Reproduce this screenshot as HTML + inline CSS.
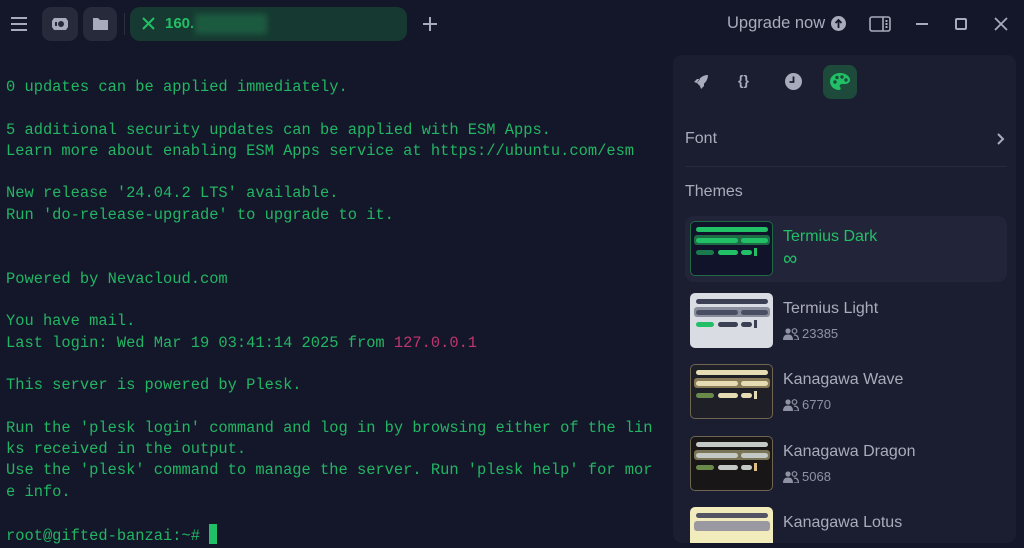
<!DOCTYPE html>
<html><head><style>
*{margin:0;padding:0;box-sizing:border-box}
body{width:1024px;height:547px;background:#141729;overflow:hidden;position:relative;font-family:"Liberation Sans",sans-serif}
.term{position:absolute;left:6px;top:77px;font-family:"Liberation Mono",monospace;font-size:15.4px;line-height:21.3px;color:#22b563;white-space:pre}
.pink{color:#c0346f}
.cur{display:inline-block;width:8px;height:20px;background:#22c066;vertical-align:-4px}
.panel{position:absolute;left:673px;top:55px;width:343px;height:488px;background:#1b1e31;border-radius:9px;overflow:hidden}
.item{position:absolute;left:12px;width:322px;height:66px;border-radius:9px}
.thumb{position:absolute;left:5px;top:5px;width:83px;height:55px;border-radius:5px;border:1px solid}
.thumb i{position:absolute;height:5px;border-radius:2.5px;display:block}
.name{position:absolute;left:98px;top:12px;font-size:16px;color:#a9acbb}
.cnt{position:absolute;left:98px;top:38px;font-size:13px;color:#8e92a3}
.cnt svg{vertical-align:-2px;margin-right:3px}
</style></head><body>
<svg style="position:absolute;left:10px;top:16px" width="18" height="16"><g stroke="#a7abbb" stroke-width="2"><line x1="1" y1="2" x2="17" y2="2"/><line x1="1" y1="8" x2="17" y2="8"/><line x1="1" y1="14" x2="17" y2="14"/></g></svg>
<div style="position:absolute;left:42px;top:7px;width:36px;height:34px;border-radius:9px;background:#272a3b"></div>
<svg style="position:absolute;left:51px;top:16px" width="18" height="16"><path d="M3 2h12l2 3v6l-2 3H3l-2-3V5z" fill="#a7abbb"/><circle cx="10" cy="8" r="3" fill="#272a3b"/><rect x="4" y="6" width="2" height="4" fill="#272a3b"/></svg>
<div style="position:absolute;left:83px;top:7px;width:34px;height:34px;border-radius:9px;background:#272a3b"></div>
<svg style="position:absolute;left:93px;top:17px" width="15" height="13"><path d="M0 1h5l2 2h8v10H0z" fill="#a7abbb"/></svg>
<div style="position:absolute;left:124px;top:13px;width:1px;height:22px;background:#2c2f40"></div>
<div style="position:absolute;left:130px;top:7px;width:277px;height:34px;border-radius:10px;background:#163a31"></div>
<svg style="position:absolute;left:142px;top:17px" width="13" height="13"><g stroke="#22c066" stroke-width="2"><line x1="1" y1="1" x2="12" y2="12"/><line x1="12" y1="1" x2="1" y2="12"/></g></svg>
<div style="position:absolute;left:165px;top:15px;font-size:15px;color:#22c066;font-weight:bold">160.</div>
<div style="position:absolute;left:195px;top:14px;width:72px;height:20px;background:#1c5a40;filter:blur(3px)"></div>
<svg style="position:absolute;left:423px;top:17px" width="14" height="14"><g stroke="#a7abbb" stroke-width="2"><line x1="7" y1="0" x2="7" y2="14"/><line x1="0" y1="7" x2="14" y2="7"/></g></svg>
<div style="position:absolute;left:727px;top:14px;font-size:16.5px;color:#a9acbb">Upgrade now</div>
<svg style="position:absolute;left:831px;top:16px" width="15" height="15"><circle cx="7.5" cy="7.5" r="7.5" fill="#a7abbb"/><path d="M7.5 12V4M4.5 7l3-3 3 3" stroke="#141729" stroke-width="1.8" fill="none"/></svg>
<svg style="position:absolute;left:869px;top:16px" width="22" height="16"><rect x="1" y="1" width="20" height="14" rx="2" fill="none" stroke="#a7abbb" stroke-width="1.6"/><line x1="14" y1="1" x2="14" y2="15" stroke="#a7abbb" stroke-width="1.6"/><g fill="#a7abbb"><rect x="16.5" y="4" width="2" height="2"/><rect x="16.5" y="7" width="2" height="2"/><rect x="16.5" y="10" width="2" height="2"/></g></svg>
<div style="position:absolute;left:916px;top:23px;width:12px;height:2px;background:#a7abbb"></div>
<div style="position:absolute;left:955px;top:18px;width:12px;height:12px;border:2px solid #a7abbb;border-radius:2px"></div>
<svg style="position:absolute;left:994px;top:17px" width="14" height="14"><g stroke="#a7abbb" stroke-width="1.8"><line x1="1" y1="1" x2="13" y2="13"/><line x1="13" y1="1" x2="1" y2="13"/></g></svg>

<div class="term">0 updates can be applied immediately.

5 additional security updates can be applied with ESM Apps.
Learn more about enabling ESM Apps service at https://ubuntu.com/esm

New release '24.04.2 LTS' available.
Run 'do-release-upgrade' to upgrade to it.


Powered by Nevacloud.com

You have mail.
Last login: Wed Mar 19 03:41:14 2025 from <span class="pink">127.0.0.1</span>

This server is powered by Plesk.

Run the 'plesk login' command and log in by browsing either of the lin
ks received in the output.
Use the 'plesk' command to manage the server. Run 'plesk help' for mor
e info.

root@gifted-banzai:~# <span class="cur"></span></div>

<div class="panel">
<svg style="position:absolute;left:21px;top:19px" width="15" height="15"><path d="M14 1C9 1 5 4 3 9l3 3c5-2 8-6 8-11zM3 9L0 8l3-3h3zM6 12l1 3 3-3V9z" fill="#a7abbb"/></svg>
<div style="position:absolute;left:65px;top:17px;font-size:14px;color:#a7abbb;font-weight:bold">{}</div>
<svg style="position:absolute;left:112px;top:18px" width="17" height="17"><circle cx="8.5" cy="8.5" r="8.5" fill="#a7abbb"/><path d="M8.5 3.5v5.5h-4" stroke="#1b1e31" stroke-width="1.8" fill="none"/></svg>
<div style="position:absolute;left:150px;top:10px;width:34px;height:34px;border-radius:8px;background:#1d4a3a"></div>
<svg style="position:absolute;left:157px;top:18px" width="20" height="17"><path d="M10 0C4 0 0 4 0 8.5S4 17 9 17c2 0 2-2 1-3s0-3 2-3h3c3 0 5-2 5-4C20 3 15 0 10 0z" fill="#22c066"/><g fill="#1d4a3a"><circle cx="5" cy="9" r="1.7"/><circle cx="7" cy="4.5" r="1.7"/><circle cx="12" cy="4" r="1.7"/><circle cx="16" cy="7" r="1.7"/></g></svg>
<div style="position:absolute;left:12px;top:75px;font-size:16px;color:#a9acbb">Font</div>
<svg style="position:absolute;left:324px;top:78px" width="8" height="12"><path d="M1 1l5 5-5 5" stroke="#a7abbb" stroke-width="2" fill="none"/></svg>
<div style="position:absolute;left:12px;top:111px;width:322px;height:1px;background:#262a3c"></div>
<div style="position:absolute;left:12px;top:128px;font-size:16px;color:#a9acbb">Themes</div>

<div class="item" style="top:161px;background:#222539">
<div class="thumb" style="background:#10132a;border-color:#1e6a44">
<i style="left:5px;top:5px;width:72px;background:#22c066"></i>
<i style="left:3px;top:13px;width:76px;height:10px;background:#1d6b45;border-radius:3px"></i>
<i style="left:5px;top:15.5px;width:42px;background:#22c066"></i><i style="left:50px;top:15.5px;width:27px;background:#22c066"></i>
<i style="left:5px;top:28px;width:18px;background:#1b7a4d"></i><i style="left:27px;top:28px;width:20px;background:#22c066"></i><i style="left:50px;top:28px;width:11px;background:#22c066"></i><i style="left:63px;top:26px;width:3px;height:8px;background:#22c066;border-radius:0"></i>
</div>
<div class="name" style="color:#22c066">Termius Dark</div>
<div class="cnt" style="color:#22c066;font-size:20px;top:32px">∞</div>
</div>

<div class="item" style="top:233px">
<div class="thumb" style="background:#d9dde3;border-color:#d9dde3">
<i style="left:5px;top:5px;width:72px;background:#3c4055"></i>
<i style="left:3px;top:13px;width:76px;height:10px;background:#8a8e9c;border-radius:3px"></i>
<i style="left:5px;top:15.5px;width:42px;background:#4a4e62"></i><i style="left:50px;top:15.5px;width:27px;background:#4a4e62"></i>
<i style="left:5px;top:28px;width:18px;background:#22c066"></i><i style="left:27px;top:28px;width:20px;background:#3c4055"></i><i style="left:50px;top:28px;width:11px;background:#3c4055"></i><i style="left:63px;top:26px;width:3px;height:8px;background:#3c4055;border-radius:0"></i>
</div>
<div class="name">Termius Light</div>
<div class="cnt"><svg width="16" height="12"><g fill="#8e92a3"><circle cx="5" cy="3" r="2.6"/><path d="M0 12c0-4 2-5.5 5-5.5s5 1.5 5 5.5z"/><circle cx="11.5" cy="3" r="2.3" fill="none" stroke="#8e92a3" stroke-width="1.2"/><path d="M11 7c3 0 4.5 1.5 4.5 5H11" fill="none" stroke="#8e92a3" stroke-width="1.2"/></g></svg>23385</div>
</div>

<div class="item" style="top:304px">
<div class="thumb" style="background:#1f1f28;border-color:#6e6650">
<i style="left:5px;top:5px;width:72px;background:#e6dcb4"></i>
<i style="left:3px;top:13px;width:76px;height:10px;background:#8a7b58;border-radius:3px"></i>
<i style="left:5px;top:15.5px;width:42px;background:#e6dcb4"></i><i style="left:50px;top:15.5px;width:27px;background:#e6dcb4"></i>
<i style="left:5px;top:28px;width:18px;background:#6a8a4a"></i><i style="left:27px;top:28px;width:20px;background:#e6dcb4"></i><i style="left:50px;top:28px;width:11px;background:#e6dcb4"></i><i style="left:63px;top:26px;width:3px;height:8px;background:#e6dcb4;border-radius:0"></i>
</div>
<div class="name">Kanagawa Wave</div>
<div class="cnt"><svg width="16" height="12"><g fill="#8e92a3"><circle cx="5" cy="3" r="2.6"/><path d="M0 12c0-4 2-5.5 5-5.5s5 1.5 5 5.5z"/><circle cx="11.5" cy="3" r="2.3" fill="none" stroke="#8e92a3" stroke-width="1.2"/><path d="M11 7c3 0 4.5 1.5 4.5 5H11" fill="none" stroke="#8e92a3" stroke-width="1.2"/></g></svg>6770</div>
</div>

<div class="item" style="top:376px">
<div class="thumb" style="background:#181616;border-color:#6e6650">
<i style="left:5px;top:5px;width:72px;background:#c5c9c5"></i>
<i style="left:3px;top:13px;width:76px;height:10px;background:#7a7456;border-radius:3px"></i>
<i style="left:5px;top:15.5px;width:42px;background:#c5c9c5"></i><i style="left:50px;top:15.5px;width:27px;background:#c5c9c5"></i>
<i style="left:5px;top:28px;width:18px;background:#6a8a4a"></i><i style="left:27px;top:28px;width:20px;background:#c5c9c5"></i><i style="left:50px;top:28px;width:11px;background:#c5c9c5"></i><i style="left:63px;top:26px;width:3px;height:8px;background:#e0c080;border-radius:0"></i>
</div>
<div class="name">Kanagawa Dragon</div>
<div class="cnt"><svg width="16" height="12"><g fill="#8e92a3"><circle cx="5" cy="3" r="2.6"/><path d="M0 12c0-4 2-5.5 5-5.5s5 1.5 5 5.5z"/><circle cx="11.5" cy="3" r="2.3" fill="none" stroke="#8e92a3" stroke-width="1.2"/><path d="M11 7c3 0 4.5 1.5 4.5 5H11" fill="none" stroke="#8e92a3" stroke-width="1.2"/></g></svg>5068</div>
</div>

<div class="item" style="top:447px">
<div class="thumb" style="background:#f2ecbc;border-color:#f2ecbc;height:60px">
<i style="left:5px;top:5px;width:72px;background:#545464"></i>
<i style="left:3px;top:13px;width:76px;height:10px;background:#9a98a0;border-radius:3px"></i>
</div>
<div class="name">Kanagawa Lotus</div>
</div>
</div>
</body></html>
